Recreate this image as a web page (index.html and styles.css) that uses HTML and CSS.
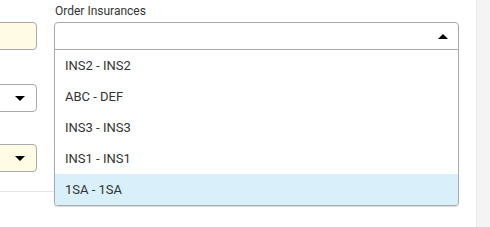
FILE: index.html
```html
<!DOCTYPE html>
<html>
<head>
<meta charset="utf-8">
<link rel="stylesheet" href="styles.css">
</head>
<body>
<div class="page">
  <div class="main">
    <div class="left-col">
      <div class="field field-first">
        <div class="control yellow"></div>
      </div>
      <div class="field field-second">
        <div class="control select"><span class="caret-down"></span></div>
      </div>
      <div class="field field-third">
        <div class="control select yellow"><span class="caret-down"></span></div>
      </div>
      <div class="divider"></div>
    </div>
    <div class="right-col">
      <label class="label">Order Insurances</label>
      <div class="combo">
        <div class="combo-box"><span class="caret-up"></span></div>
        <ul class="combo-list">
          <li class="item">INS2 - INS2</li>
          <li class="item">ABC - DEF</li>
          <li class="item">INS3 - INS3</li>
          <li class="item">INS1 - INS1</li>
          <li class="item active">1SA - 1SA</li>
        </ul>
      </div>
    </div>
  </div>
  <div class="sidebar"></div>
</div>
</body>
</html>
```

FILE: styles.css
```css
html, body {
  margin: 0;
  padding: 0;
  background: #fff;
}
body {
  font-family: Roboto, "Liberation Sans", sans-serif;
  font-size: 12px;
  color: #333;
  width: 490px;
  height: 227px;
  overflow: hidden;
}
.page {
  display: flex;
  height: 227px;
}
.main {
  flex: 1;
  display: flex;
  position: relative;
}
.sidebar {
  width: 13px;
  background: #f4f4f4;
  border-left: 1px solid #ececec;
}
.left-col {
  width: 67px;
  margin-left: -30px;
  display: flex;
  flex-direction: column;
}
.field-first { margin-top: 22px; }
.field-second { margin-top: 34px; }
.field-third { margin-top: 32px; }
.control {
  box-sizing: border-box;
  height: 28px;
  border: 1px solid #aaa;
  border-radius: 4px;
  background: #fff;
  display: flex;
  align-items: center;
  justify-content: flex-end;
  padding-right: 11px;
}
.control.yellow { background: #fffbe5; }
.caret-down {
  width: 0;
  height: 0;
  border-left: 5px solid transparent;
  border-right: 5px solid transparent;
  border-top: 5px solid #000;
}
.divider {
  margin-top: 19px;
  height: 1px;
  width: 140px;
  background: #e6e6e6;
}
.right-col {
  margin-left: 17px;
  width: 405px;
  display: flex;
  flex-direction: column;
  position: relative;
  z-index: 1;
}
.label {
  margin-top: 4px;
  margin-left: 1px;
  line-height: 14px;
  height: 18px;
}
.combo {
  position: relative;
}
.combo-box {
  box-sizing: border-box;
  height: 28px;
  border: 1px solid #aaa;
  border-radius: 4px 4px 0 0;
  background: #fff;
  display: flex;
  align-items: center;
  justify-content: flex-end;
  padding-right: 10px;
}
.caret-up {
  width: 0;
  height: 0;
  border-left: 5px solid transparent;
  border-right: 5px solid transparent;
  border-bottom: 5px solid #000;
}
.combo-list {
  position: absolute;
  left: 0;
  right: 0;
  top: 27px;
  margin: 0;
  padding: 0;
  list-style: none;
  background: #fff;
  border: 1px solid #aaa;
  border-radius: 0 0 4px 4px;
  box-shadow: 0 1px 1px rgba(0,0,0,0.15);
  overflow: hidden;
}
.item {
  height: 31px;
  line-height: 31px;
  padding-left: 10px;
  font-size: 13px;
}
.item.active {
  background: #d9eff9;
}
```
